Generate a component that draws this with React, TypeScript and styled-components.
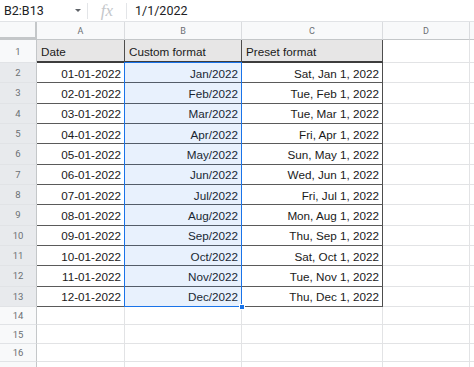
import React from 'react';
import styled, { createGlobalStyle } from 'styled-components';

const GlobalStyle = createGlobalStyle`
  html, body {
    margin: 0;
    padding: 0;
    background: #ffffff;
    overflow: hidden;
  }
  * {
    box-sizing: border-box;
  }
`;

const Page = styled.div`
  width: 474px;
  height: 367px;
  overflow: hidden;
  font-family: Roboto, 'Liberation Sans', Arial, sans-serif;
`;

const FormulaBar = styled.div`
  display: flex;
  align-items: center;
  height: 22px;
  border-bottom: 1px solid #e1e3e6;
  color: #202124;
  font-size: 12.5px;
`;

const NameBox = styled.div`
  display: flex;
  align-items: center;
  justify-content: space-between;
  width: 88px;
  padding: 0 6px 0 4px;
  border-right: 1px solid #e3e5e8;
  height: 16px;
`;

const Caret = styled.span`
  width: 0;
  height: 0;
  border-left: 3px solid transparent;
  border-right: 3px solid transparent;
  border-top: 3px solid #5f6368;
`;

const FxLabel = styled.div`
  width: 39px;
  text-align: center;
  font-family: 'Liberation Serif', 'DejaVu Serif', serif;
  font-style: italic;
  font-size: 17px;
  color: #c4c7cb;
  border-right: 1px solid #e3e5e8;
  height: 16px;
  line-height: 15px;
`;

const FormulaValue = styled.div`
  padding-left: 8px;
`;

const Sheet = styled.div`
  display: grid;
  grid-template-columns: 37px 88px 117px 141px 87px 1fr;
  grid-template-rows: 18px 23px repeat(12, 20.33px) repeat(4, 18.5px);
  font-family: 'Liberation Sans', Arial, sans-serif;
`;

const Corner = styled.div`
  grid-row: 1;
  grid-column: 1;
  background: #f8f9fa;
  border-right: 3px solid #c4c7c9;
  border-bottom: 3px solid #c4c7c9;
  margin-right: -1px;
`;

const ColHead = styled.div<{ $col: number }>`
  grid-row: 1;
  grid-column: ${(p) => p.$col};
  display: flex;
  align-items: center;
  justify-content: center;
  background: #f8f9fa;
  border-right: 1px solid #dadcdf;
  border-bottom: 1px solid #c4c7c9;
  color: #6b6f73;
  font-family: Roboto, 'Liberation Sans', sans-serif;
  font-size: 9px;
`;

const RowHead = styled.div<{ $row: number; $active?: boolean }>`
  grid-row: ${(p) => p.$row};
  grid-column: 1;
  display: flex;
  align-items: center;
  justify-content: center;
  background: ${(p) => (p.$active ? '#e8eaed' : '#f8f9fa')};
  border-right: 1px solid #c4c7c9;
  border-bottom: 1px solid #e1e3e6;
  color: #6b6f73;
  font-family: Roboto, 'Liberation Sans', sans-serif;
  font-size: 9.5px;
`;

type Kind = 'title' | 'data' | 'empty';

const Cell = styled.div<{ $row: number; $col: number; $kind: Kind; $right?: boolean }>`
  grid-row: ${(p) => p.$row};
  grid-column: ${(p) => p.$col};
  display: flex;
  align-items: center;
  justify-content: ${(p) => (p.$right ? 'flex-end' : 'flex-start')};
  padding: ${(p) => (p.$right ? '1px 3px 0 0' : '1px 0 0 4px')};
  font-size: 11.7px;
  color: #1a1a1a;
  white-space: nowrap;
  background: ${(p) => (p.$kind === 'title' ? '#e7e6e6' : '#ffffff')};
  border-right: 1px solid ${(p) => (p.$kind === 'empty' ? '#e2e3e5' : '#4d4d4d')};
  border-bottom: ${(p) =>
    p.$kind === 'title' ? '2px solid #3d3d3d' : p.$kind === 'data' ? '1px solid #5a5a5a' : '1px solid #e2e3e5'};
`;

const Selection = styled.div`
  grid-column: 3;
  grid-row: 3 / 15;
  position: relative;
  margin: -1px 0 0 -1px;
  border: 1px solid #1a73e8;
  background: rgba(26, 115, 232, 0.1);
  pointer-events: none;
`;

const FillHandle = styled.span`
  position: absolute;
  right: -4px;
  bottom: -4px;
  width: 6px;
  height: 6px;
  background: #1a73e8;
  border: 1px solid #ffffff;
`;

const rows: [string, string, string][] = [
  ['01-01-2022', 'Jan/2022', 'Sat, Jan 1, 2022'],
  ['02-01-2022', 'Feb/2022', 'Tue, Feb 1, 2022'],
  ['03-01-2022', 'Mar/2022', 'Tue, Mar 1, 2022'],
  ['04-01-2022', 'Apr/2022', 'Fri, Apr 1, 2022'],
  ['05-01-2022', 'May/2022', 'Sun, May 1, 2022'],
  ['06-01-2022', 'Jun/2022', 'Wed, Jun 1, 2022'],
  ['07-01-2022', 'Jul/2022', 'Fri, Jul 1, 2022'],
  ['08-01-2022', 'Aug/2022', 'Mon, Aug 1, 2022'],
  ['09-01-2022', 'Sep/2022', 'Thu, Sep 1, 2022'],
  ['10-01-2022', 'Oct/2022', 'Sat, Oct 1, 2022'],
  ['11-01-2022', 'Nov/2022', 'Tue, Nov 1, 2022'],
  ['12-01-2022', 'Dec/2022', 'Thu, Dec 1, 2022'],
];

const letters = ['A', 'B', 'C', 'D', ''];
// row 17 only peeks in at the bottom edge, so it shows no number
const emptyRows = [14, 15, 16, 17];

function App() {
  return (
    <Page>
      <GlobalStyle />
      <FormulaBar>
        <NameBox>
          <span>B2:B13</span>
          <Caret />
        </NameBox>
        <FxLabel>fx</FxLabel>
        <FormulaValue>1/1/2022</FormulaValue>
      </FormulaBar>

      <Sheet>
        <Corner />
        {letters.map((l, i) => (
          <ColHead key={i} $col={i + 2}>
            {l}
          </ColHead>
        ))}

        {/* header row */}
        <RowHead $row={2}>1</RowHead>
        <Cell $row={2} $col={2} $kind="title">Date</Cell>
        <Cell $row={2} $col={3} $kind="title">Custom format</Cell>
        <Cell $row={2} $col={4} $kind="title">Preset format</Cell>
        <Cell $row={2} $col={5} $kind="empty" />
        <Cell $row={2} $col={6} $kind="empty" />

        {rows.map((r, i) => (
          <React.Fragment key={r[0]}>
            <RowHead $row={i + 3} $active>
              {i + 2}
            </RowHead>
            {r.map((v, j) => (
              <Cell key={j} $row={i + 3} $col={j + 2} $kind="data" $right>
                {v}
              </Cell>
            ))}
            <Cell $row={i + 3} $col={5} $kind="empty" />
            <Cell $row={i + 3} $col={6} $kind="empty" />
          </React.Fragment>
        ))}

        {emptyRows.map((n) => (
          <React.Fragment key={n}>
            <RowHead $row={n + 1}>{n < 17 ? n : ''}</RowHead>
            {[2, 3, 4, 5, 6].map((c) => (
              <Cell key={c} $row={n + 1} $col={c} $kind="empty" />
            ))}
          </React.Fragment>
        ))}

        <Selection>
          <FillHandle />
        </Selection>
      </Sheet>
    </Page>
  );
}

export default App;
